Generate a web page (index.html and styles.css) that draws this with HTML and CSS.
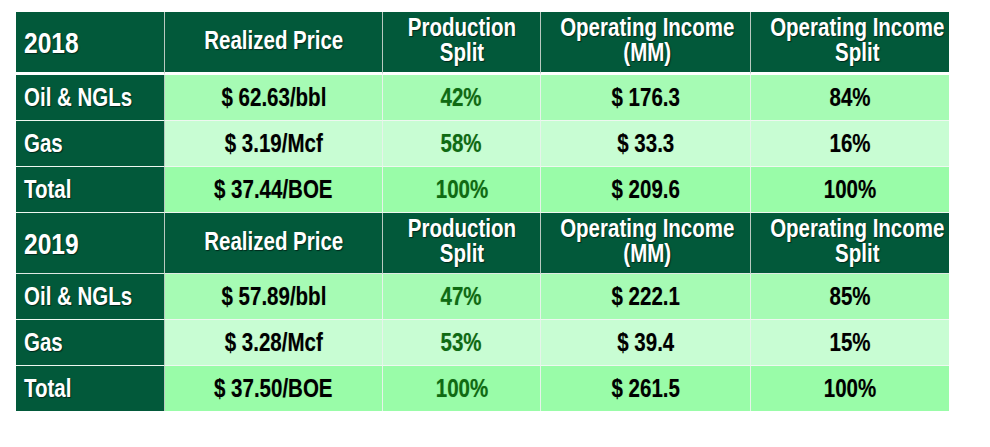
FILE: index.html
```html
<!DOCTYPE html>
<html lang="en">
<head>
<meta charset="utf-8">
<title>Realized Price and Operating Income</title>
<link rel="stylesheet" href="styles.css">
</head>
<body>
<main class="page">
  <table class="fin">
    <colgroup>
      <col class="c1"><col class="c2"><col class="c3"><col class="c4"><col class="c5">
    </colgroup>
    <tbody>
      <tr class="head first">
        <th class="year"><span class="t">2018</span></th>
        <th><span class="t">Realized Price</span></th>
        <th><span class="t">Production<br>Split</span></th>
        <th><span class="t">Operating Income<br>(MM)</span></th>
        <th><span class="t">Operating Income<br>Split</span></th>
      </tr>
      <tr class="row oil">
        <th class="label"><span class="t">Oil &amp; NGLs</span></th>
        <td><span class="t">$ 62.63/bbl</span></td>
        <td class="pct"><span class="t">42%</span></td>
        <td><span class="t">$ 176.3</span></td>
        <td><span class="t">84%</span></td>
      </tr>
      <tr class="row gas">
        <th class="label"><span class="t">Gas</span></th>
        <td><span class="t">$ 3.19/Mcf</span></td>
        <td class="pct"><span class="t">58%</span></td>
        <td><span class="t">$ 33.3</span></td>
        <td><span class="t">16%</span></td>
      </tr>
      <tr class="row total">
        <th class="label"><span class="t">Total</span></th>
        <td><span class="t">$ 37.44/BOE</span></td>
        <td class="pct"><span class="t">100%</span></td>
        <td><span class="t">$ 209.6</span></td>
        <td><span class="t">100%</span></td>
      </tr>
      <tr class="head">
        <th class="year"><span class="t">2019</span></th>
        <th><span class="t">Realized Price</span></th>
        <th><span class="t">Production<br>Split</span></th>
        <th><span class="t">Operating Income<br>(MM)</span></th>
        <th><span class="t">Operating Income<br>Split</span></th>
      </tr>
      <tr class="row oil">
        <th class="label"><span class="t">Oil &amp; NGLs</span></th>
        <td><span class="t">$ 57.89/bbl</span></td>
        <td class="pct"><span class="t">47%</span></td>
        <td><span class="t">$ 222.1</span></td>
        <td><span class="t">85%</span></td>
      </tr>
      <tr class="row gas">
        <th class="label"><span class="t">Gas</span></th>
        <td><span class="t">$ 3.28/Mcf</span></td>
        <td class="pct"><span class="t">53%</span></td>
        <td><span class="t">$ 39.4</span></td>
        <td><span class="t">15%</span></td>
      </tr>
      <tr class="row total last">
        <th class="label"><span class="t">Total</span></th>
        <td><span class="t">$ 37.50/BOE</span></td>
        <td class="pct"><span class="t">100%</span></td>
        <td><span class="t">$ 261.5</span></td>
        <td><span class="t">100%</span></td>
      </tr>
    </tbody>
  </table>
</main>
</body>
</html>
```

FILE: styles.css
```css
html, body {
  margin: 0;
  padding: 0;
  background: #ffffff;
}

.page {
  padding: 12px 0 0 16px;
}

.fin {
  border-collapse: separate;
  border-spacing: 0;
  table-layout: fixed;
  width: 933px;
  font-family: "Liberation Sans", Arial, sans-serif;
  font-weight: bold;
  font-size: 25px;
}

.c1 { width: 149px; }
.c2 { width: 218px; }
.c3 { width: 158px; }
.c4 { width: 210px; }
.c5 { width: 198px; }

.fin th,
.fin td {
  padding: 0;
  text-align: center;
  vertical-align: middle;
  border-right: 1px solid #e6f3ea;
  border-bottom: 1px solid #eef8f0;
  white-space: nowrap;
  overflow: visible;
}

/* Arial Narrow look: condensed Arial */
.t {
  display: inline-block;
  transform: scaleX(0.82);
  transform-origin: center center;
}

.fin tr > :last-child {
  border-right: none;
}

.head th {
  height: 60px;
  background: #02593a;
  color: #ffffff;
  line-height: 25px;
  font-weight: bold;
  text-shadow: 1px 1px 1px rgba(0, 0, 0, 0.55);
  border-right-color: #b9c9c0;
  border-bottom-color: #dfe9e3;
}

.head th .t {
  position: relative;
  top: -2px;
}

.head.first th {
  border-bottom: 3px solid #ffffff;
}

.head th.year {
  text-align: left;
  padding-left: 8px;
  font-size: 30px;
}

.head th.year .t {
  top: 0;
}

.fin th.year .t,
.fin th.label .t {
  transform-origin: left center;
}

.row th,
.row td {
  height: 45px;
  color: #000000;
  text-shadow: 0 0 1px rgba(0, 0, 0, 0.25);
}

.row th.label {
  background: #02593a;
  color: #ffffff;
  text-align: left;
  padding-left: 8px;
  text-shadow: 1px 1px 1px rgba(0, 0, 0, 0.55);
  border-right-color: #b9c9c0;
}

.oil td { background: #a6fbb4; }
.gas td { background: #c8fdd3; }
.total td { background: #99fca8; }

.row td.pct {
  color: #0f6b12;
}

.last th,
.last td {
  border-bottom: none;
}
```
